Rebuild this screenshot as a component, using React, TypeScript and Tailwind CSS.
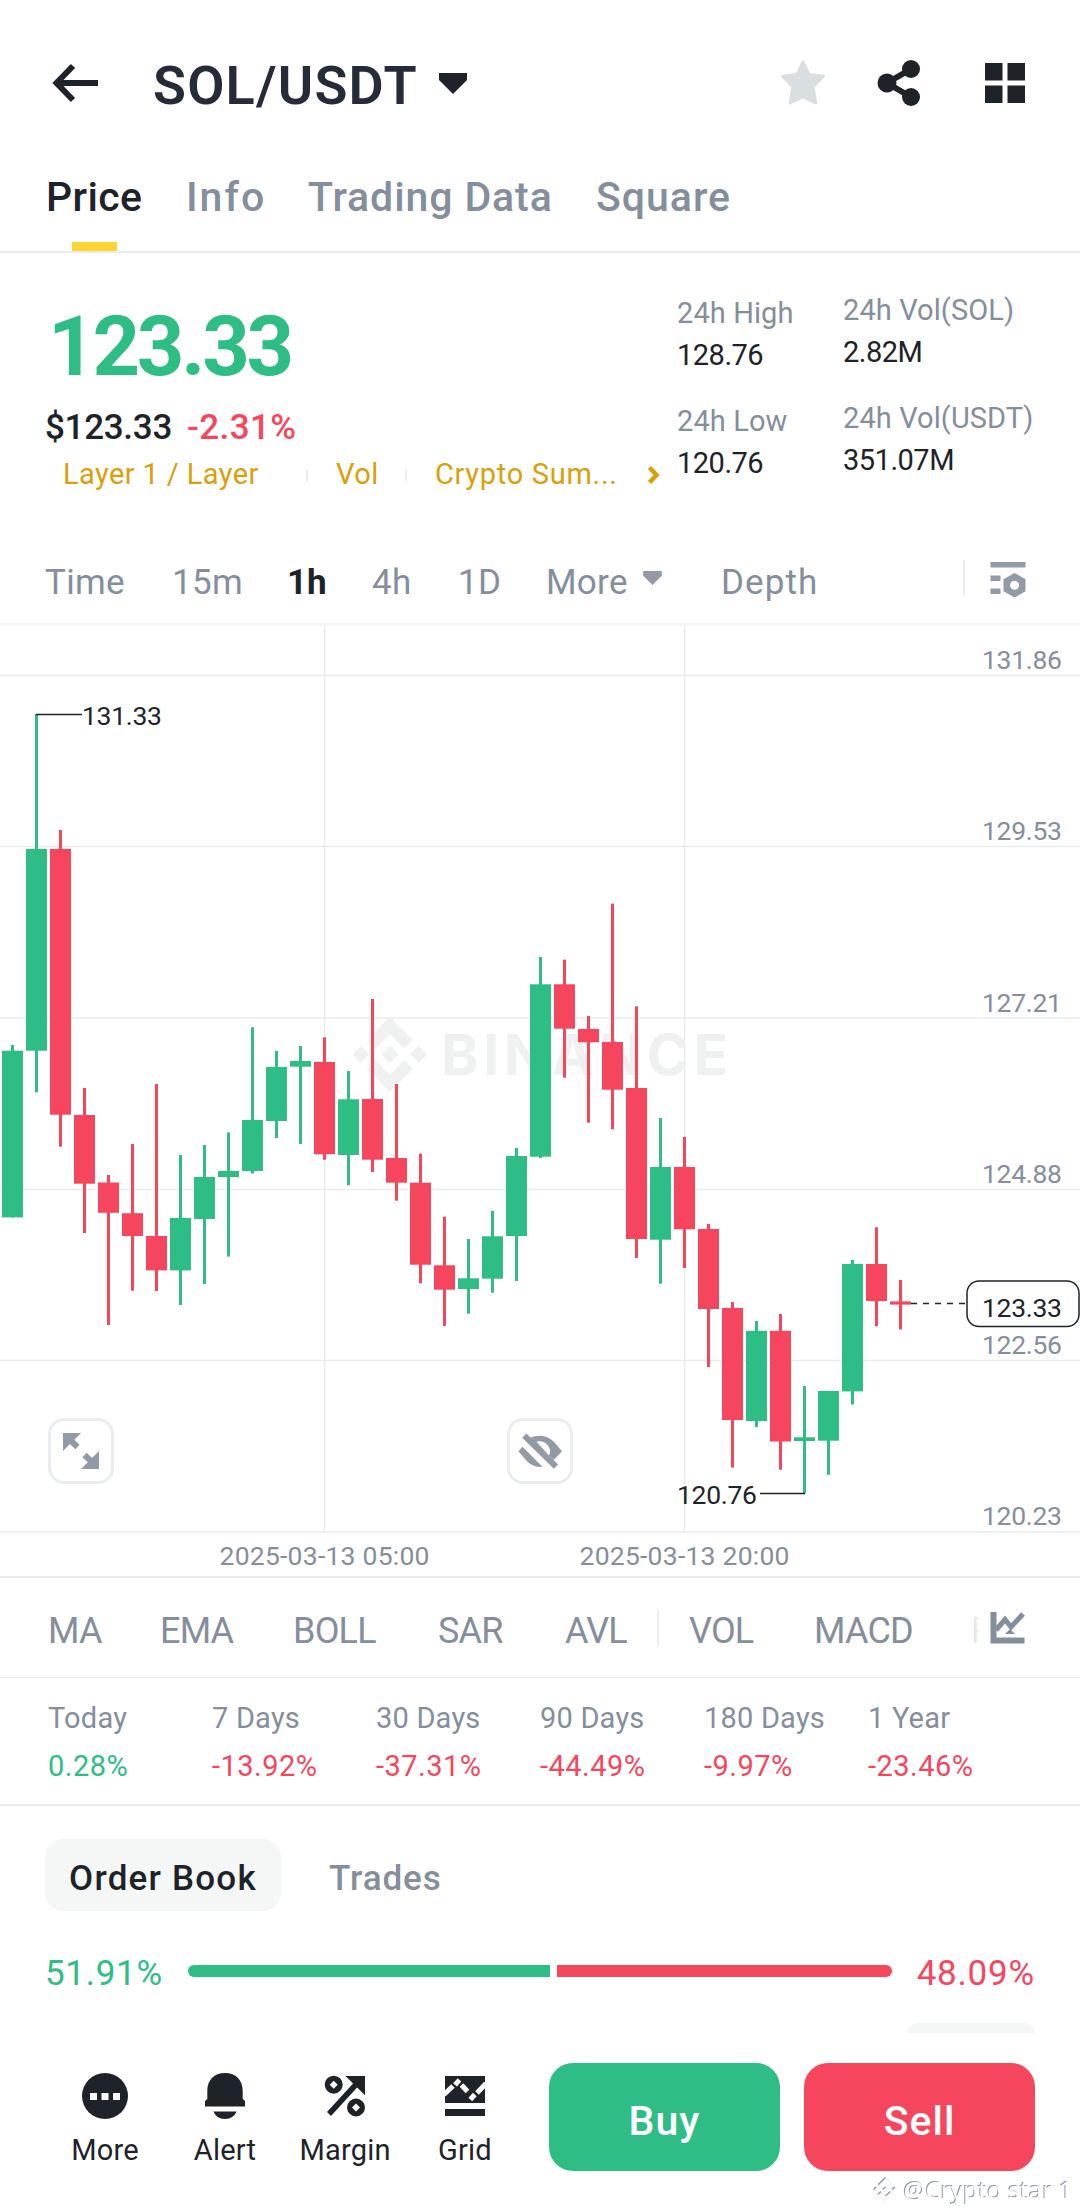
import React from "react";
import clsx from "clsx";

const LOGO_PATH =
  "M38.73 53.2l24.59-24.58 24.6 24.6 14.3-14.31L63.32 0l-38.9 38.9zM0 63.31l14.3-14.31 14.31 14.31-14.31 14.3zM38.73 73.41l24.59 24.59 24.6-24.6 14.31 14.29-38.9 38.91-38.91-38.88zM98 63.31l14.3-14.31 14.31 14.3-14.31 14.32zM77.83 63.3L63.32 48.78 48.81 63.28l14.51 14.5z";

const UP = "#2ebd85";
const DOWN = "#f6465d";

// direction, high, body top, body bottom, low
type Candle = ["u" | "d", number, number, number, number];

const candles: Candle[] = [
  ["u", 1045, 1050.7, 1217.4, 1217.4],
  ["u", 714, 849, 1050.7, 1092.4],
  ["d", 830, 849, 1114.7, 1146.7],
  ["d", 1088, 1115, 1183.7, 1233],
  ["d", 1175, 1182.5, 1212.8, 1325],
  ["d", 1144, 1213.2, 1236, 1290.7],
  ["d", 1084, 1236, 1270.4, 1291],
  ["u", 1155, 1218, 1270.4, 1305],
  ["u", 1145, 1177, 1219, 1284],
  ["u", 1132.4, 1171, 1177, 1256.6],
  ["u", 1027.3, 1120, 1171, 1173.5],
  ["u", 1051, 1067, 1121, 1138],
  ["u", 1046, 1061, 1066.7, 1144],
  ["d", 1037.3, 1062, 1154.3, 1159.7],
  ["u", 1071, 1099.3, 1155, 1185.3],
  ["d", 999, 1099, 1159.7, 1172],
  ["d", 1084, 1158, 1182.7, 1200.7],
  ["d", 1153.7, 1182.7, 1264.7, 1283.3],
  ["d", 1216.7, 1265.3, 1289.7, 1326],
  ["u", 1239, 1278.3, 1289, 1313.7],
  ["u", 1211, 1236.3, 1278.7, 1292.7],
  ["u", 1148, 1156, 1236, 1281],
  ["u", 957, 984.3, 1156.7, 1158],
  ["d", 959.6, 984.3, 1028.7, 1077.7],
  ["d", 1016, 1029, 1042.3, 1122.7],
  ["d", 903.6, 1042, 1089.7, 1129.3],
  ["d", 1006.3, 1088, 1239, 1258],
  ["u", 1118, 1167, 1239.7, 1283.7],
  ["d", 1137, 1167, 1229.3, 1268],
  ["d", 1224, 1229, 1309, 1367],
  ["d", 1302, 1308, 1420, 1467.6],
  ["u", 1321, 1330.8, 1421, 1427.2],
  ["d", 1314, 1330.8, 1441.5, 1469.7],
  ["u", 1386, 1437.3, 1441, 1493],
  ["u", 1391, 1391, 1440.7, 1474.8],
  ["u", 1260, 1264, 1391.4, 1404.5],
  ["d", 1227.3, 1264, 1301, 1326.2],
  ["d", 1280, 1301.4, 1304.6, 1329.5],
];

const gridRows = [
  { y: 675.5, label: "131.86" },
  { y: 846.5, label: "129.53" },
  { y: 1018, label: "127.21" },
  { y: 1189.5, label: "124.88" },
  { y: 1360.5, label: "122.56" },
  { y: 1531.8, label: "120.23" },
];

const gridColumns = [
  { x: 324.5, label: "2025-03-13 05:00" },
  { x: 684.5, label: "2025-03-13 20:00" },
];

const tabs = [
  { label: "Price", className: "w-[96px] tracking-[0.4px]", active: true },
  { label: "Info", className: "w-[78px] tracking-[2px]" },
  { label: "Trading Data", className: "w-[244px] tracking-[0.9px]" },
  { label: "Square", className: "w-[136px] tracking-[1px]" },
];

const intervals = [
  { label: "Time", width: "w-[127px]" },
  { label: "15m", width: "w-[115px]" },
  { label: "1h", width: "w-[85px]", active: true },
  { label: "4h", width: "w-[86px]" },
  { label: "1D", width: "w-[88px]" },
  { label: "More", width: "w-[97px]" },
];

const indicators = [
  { label: "MA", width: "w-[112px]" },
  { label: "EMA", width: "w-[133px]" },
  { label: "BOLL", width: "w-[145px]" },
  { label: "SAR", width: "w-[127px]" },
  { label: "AVL", width: "w-[92px]" },
];

const periods = [
  { label: "Today", value: "0.28%" },
  { label: "7 Days", value: "-13.92%" },
  { label: "30 Days", value: "-37.31%" },
  { label: "90 Days", value: "-44.49%" },
  { label: "180 Days", value: "-9.97%" },
  { label: "1 Year", value: "-23.46%" },
];

const Caret = ({ className }: { className?: string }) => (
  <svg viewBox="0 0 28 21" className={className} fill="currentColor">
    <path d="M0 0h28v7L14 21 0 7z" />
  </svg>
);

const Header = () => (
  <header className="flex h-[166px] items-center pl-[52px] pr-[55px]">
    <svg width="48" height="40" viewBox="0 0 48 40" fill="none" stroke="currentColor" strokeWidth="6">
      <path d="M46 20H6M21 3L4.5 20 21 37" />
    </svg>
    <h1 className="ml-[53px] w-[267px] whitespace-nowrap pt-[5px] text-[54px] font-semibold leading-[54px] tracking-[1.2px] text-[#252c38]">
      SOL/USDT
    </h1>
    <Caret className="ml-[19px] h-[21px] w-[28px]" />
    <div className="ml-auto flex items-center">
      <svg width="48" height="48" viewBox="0 0 48 48" className="text-[#d9dfe1]">
        <path
          d="M24 3l6 12.500 14.500 1.800-10.500 10.700 2.800 16L24 38 11.200 44 14 28 3.500 17.300 18 15.500z"
          fill="currentColor"
          stroke="currentColor"
          strokeWidth="3"
          strokeLinejoin="round"
        />
      </svg>
      <svg width="48" height="48" viewBox="0 0 48 48" className="ml-[48px]" fill="currentColor">
        <path d="M36 10L12 24l24 14" fill="none" stroke="currentColor" strokeWidth="6" />
        <circle cx="36" cy="10" r="9" />
        <circle cx="12" cy="24" r="9.500" />
        <circle cx="36" cy="38" r="9" />
      </svg>
      <svg width="40" height="40" viewBox="0 0 40 40" className="ml-[62px]" fill="currentColor">
        <path d="M0 0h17.500v17.500H0zM22.500 0H40v17.500H22.500zM0 22.500h17.500V40H0zM22.500 22.500H40V40H22.500z" />
      </svg>
    </div>
  </header>
);

const Tabs = () => (
  <nav className="flex h-[87px] gap-[44px] border-b-2 border-[#eaecef] pl-[46px]">
    {tabs.map(({ label, className, active }) => (
      <div
        key={label}
        className={clsx(
          "flex h-full flex-col justify-between whitespace-nowrap pt-[11px] text-[41px] font-medium leading-[41px]",
          className,
          active ? "text-[#1e2329]" : "text-[#848e9c]",
        )}
      >
        {label}
        {active && <span className="h-[9px] w-[45px] self-center bg-[#fcd535]" />}
      </div>
    ))}
  </nav>
);

const Stat = ({ label, value }: { label: string; value: string }) => (
  <div className="flex h-[108px] flex-col gap-[13px] whitespace-nowrap">
    <span className="text-[29px] leading-[29px] tracking-[0.1px] text-[#848e9c]">{label}</span>
    <span className="text-[29px] leading-[29px] tracking-[-0.5px]">{value}</span>
  </div>
);

const Summary = () => (
  <section className="flex h-[288px]">
    <div className="flex w-[677px] shrink-0 flex-col pl-[46px] pt-[52px]">
      <div className="pl-[2px] text-[83px] font-bold leading-[83px] tracking-[-3.2px] text-[#2ebd85]">
        123.33
      </div>
      <div className="mt-[22px] flex gap-[15px] text-[35px] font-medium leading-[35px]">
        <span className="-ml-px tracking-[-0.3px]">$123.33</span>
        <span className="tracking-[0.4px] text-[#f6465d]">-2.31%</span>
      </div>
      <div className="mt-[15px] flex items-center whitespace-nowrap pl-[16px] text-[29px] leading-[29px] text-[#d9a00c]">
        <span className="w-[244px] pl-px tracking-[0.4px]">Layer 1 / Layer</span>
        <span className="h-[12px] w-[2px] bg-[#eaecef]" />
        <span className="ml-[28px] w-[69px] tracking-[0.5px]">Vol</span>
        <span className="h-[12px] w-[2px] bg-[#eaecef]" />
        <span className="ml-[28px] w-[212px] tracking-[0.7px]">Crypto Sum...</span>
        <svg width="13" height="18" viewBox="0 0 13 18" fill="none" stroke="currentColor" strokeWidth="4.500">
          <path d="M2.500 1.500L9.500 9l-7 7.500" />
        </svg>
      </div>
    </div>
    <div className="w-[166px] pt-[46px]">
      <Stat label="24h High" value="128.76" />
      <Stat label="24h Low" value="120.76" />
    </div>
    <div className="pt-[43px]">
      <Stat label="24h Vol(SOL)" value="2.82M" />
      <Stat label="24h Vol(USDT)" value="351.07M" />
    </div>
  </section>
);

const IntervalBar = () => (
  <div className="flex h-[85px] items-center border-b-[3px] border-[#f5f7f7] pl-[45px] text-[35px] leading-[35px] text-[#848e9c]">
    {intervals.map(({ label, width, active }) => (
      <span key={label} className={clsx(width, active ? "font-bold text-[#1e2329]" : "tracking-[0.3px]")}>
        {label}
      </span>
    ))}
    <Caret className="-mt-[8px] h-[14px] w-[19px] text-[#929aa5]" />
    <span className="ml-[59px] tracking-[1.1px]">Depth</span>
    <span className="-mt-[8px] ml-auto h-[36px] w-[2px] bg-[#eaecef]" />
    <svg width="36" height="36" viewBox="0 0 36 36" className="-mt-[6px] ml-[25px] mr-[54px] text-[#929aa5]">
      <path
        d="M.500 1h35v5.500h-35zM.500 14.500h10V20h-10zM.500 27.500h10V33h-10z"
        fill="currentColor"
      />
      <path
        d="M24.500 12l11 6.200v12.100l-11 6.200-11-6.200V18.200zm0 7.700a4.500 4.500 0 100 9 4.500 4.500 0 000-9z"
        fill="currentColor"
        fillRule="evenodd"
      />
    </svg>
  </div>
);

const Chart = () => (
  <section className="relative h-[952px] border-b-2 border-[#eaecef]">
    <svg width="1080" height="950" viewBox="0 626 1080 950" fontSize="26.500" className="block">
      <g stroke="#eaecec" strokeWidth="1.500">
        {gridRows.map(({ y }) => (
          <path key={y} d={`M0 ${y}h1080`} />
        ))}
        {gridColumns.map(({ x }) => (
          <path key={x} d={`M${x} 626V1532`} />
        ))}
      </g>
      <g fill="#eff1f1">
        <path d={LOGO_PATH} transform="translate(352.500 1017) scale(.59)" />
        <text
          x="441"
          y="1075"
          textLength="287"
          fontSize="57"
          fontWeight="700"
          fontFamily="Inter, sans-serif"
        >
          BINANCE
        </text>
      </g>
      {candles.map(([direction, high, top, bottom, low], index) => {
        const x = 12.5 + index * 24;
        return (
          <g key={index} fill={direction === "u" ? UP : DOWN}>
            <rect x={x - 1.5} y={high} width="3" height={low - high} />
            <rect x={x - 10.5} y={top} width="21" height={bottom - top} />
          </g>
        );
      })}
      <g fill="#848e9c">
        {gridRows.map(({ y, label }) => (
          <text key={label} x="982" y={y - 6.5} textLength="80">
            {label}
          </text>
        ))}
        {gridColumns.map(({ x, label }) => (
          <text key={label} x={x - 105} y="1564.500" textLength="210">
            {label}
          </text>
        ))}
      </g>
      <g stroke="#1e2329" strokeWidth="1.500" fill="none">
        <path d="M36 714.500h46M760 1493.500h45" />
        <path d="M911 1303.500h55" strokeDasharray="6 6" />
        <rect x="967" y="1281" width="112" height="45.500" rx="12" fill="#fff" />
      </g>
      <g fill="#1e2329">
        <text x="82" y="724.500" textLength="80">131.33</text>
        <text x="677" y="1503.500" textLength="80">120.76</text>
        <text x="982" y="1316.500" textLength="80">123.33</text>
      </g>
    </svg>
    <button className="absolute left-[48px] top-[792px] size-[66px] rounded-[16px] border-[3px] border-[#e9edf0] bg-white text-[#929aa5]">
      <svg width="60" height="60" viewBox="3 3 60 60" fill="currentColor">
        <path d="M15 15h18L15 33zM51 51H33l18-18z" />
        <path d="M20 20l9.500 9M36.500 37l9.500 9" stroke="currentColor" strokeWidth="6" />
      </svg>
    </button>
    <button className="absolute left-[507px] top-[792px] size-[66px] rounded-[16px] border-[3px] border-[#e9edf0] bg-white text-[#929aa5]">
      <svg width="60" height="60" viewBox="3 3 60 60" fill="currentColor">
        <path d="M17.300 17.700L49 48.700" stroke="currentColor" strokeWidth="6" />
        <path
          d="M23 20c8-4 18-3 25 5l7 8.300-8.300 8.700zM29.500 23.500l12.500 14c4-7-3-16-12.500-14z"
          fillRule="evenodd"
        />
        <path d="M11.500 33.300l4-4.600L35.700 49c-6 0-11-1-16-6z" />
      </svg>
    </button>
  </section>
);

const IndicatorBar = () => (
  <div className="flex h-[100px] items-center border-b border-[#eaecef] pl-[48px] text-[36px] leading-[36px] tracking-[-0.8px] text-[#848e9c]">
    {indicators.map(({ label, width }) => (
      <span key={label} className={clsx("pt-[7px]", width)}>
        {label}
      </span>
    ))}
    <span className="h-[36px] w-[2px] bg-[#eaecef]" />
    <span className="ml-[30px] w-[125px] pt-[7px]">VOL</span>
    <span className="w-[157px] pt-[7px]">MACD</span>
    <span className="w-[23px] bg-linear-to-r from-[#d5d9dd] to-transparent to-45% bg-clip-text pt-[7px] text-transparent">
      R
    </span>
    <svg width="36" height="36" viewBox="0 0 36 36" className="-ml-[4px]" fill="none" stroke="currentColor">
      <path d="M3.500 2v28.500h31" strokeWidth="6" />
      <path d="M6 20l9-10.500 6 7.500L33 4" strokeWidth="5" />
      <path d="M15 24l5-5 5 5z" fill="currentColor" stroke="none" />
    </svg>
  </div>
);

const Performance = () => (
  <div className="flex h-[128px] border-b-2 border-[#eaecef] pl-[48px] pt-[26px]">
    {periods.map(({ label, value }) => (
      <div key={label} className="flex w-[164px] flex-col gap-[19px] text-[29px] leading-[29px]">
        <span className="tracking-[0.2px] text-[#848e9c]">{label}</span>
        <span className={clsx("tracking-[0.5px]", value.startsWith("-") ? "text-[#f6465d]" : "text-[#2ebd85]")}>
          {value}
        </span>
      </div>
    ))}
  </div>
);

const OrderBook = () => (
  <section className="flex h-[227px] flex-col overflow-hidden px-[45px] pt-[33px] text-[35px] leading-[35px]">
    <div className="flex font-medium">
      <div className="flex h-[72px] w-[236px] items-center justify-center rounded-[18px] bg-[#f5f7f7] pt-[6px] tracking-[1.2px]">
        Order Book
      </div>
      <div className="flex h-[72px] items-center pl-[48px] pt-[6px] tracking-[0.9px] text-[#848e9c]">Trades</div>
    </div>
    <div className="mt-[42px] flex h-[35px] items-center">
      <span className="w-[143px] pt-[5px] tracking-[0.7px] text-[#2ebd85]">51.91%</span>
      <div className="flex h-[12px] flex-1 gap-[7px]">
        <div className="w-[362px] rounded-l-full bg-[#2ebd85]" />
        <div className="flex-1 rounded-r-full bg-[#f6465d]" />
      </div>
      <span className="w-[143px] pt-[5px] text-right tracking-[0.8px] text-[#f6465d]">48.09%</span>
    </div>
    <div className="ml-auto mt-[35px] h-[40px] w-[128px] shrink-0 rounded-[10px] bg-[#f5f7f7]" />
  </section>
);

const Action = ({ label, children }: { label: string; children: React.ReactNode }) => (
  <div className="flex w-[120px] flex-col items-center gap-[16px] text-[29px] leading-[29px] tracking-[0.2px]">
    <svg width="48" height="48" viewBox="0 0 48 48" fill="currentColor">
      {children}
    </svg>
    {label}
  </div>
);

const BottomBar = () => (
  <footer className="relative flex h-[178px] pl-[45px] pr-[45px] pt-[30px]">
    <div className="flex w-[504px] pt-[9px]">
      <Action label="More">
        <circle cx="24" cy="24" r="23" />
        <path d="M9 21h7v7H9zM20.500 21h7v7h-7zM32 21h7v7h-7z" fill="#fff" />
      </Action>
      <Action label="Alert">
        <path d="M6.300 19C6.300 8 13 1 24 1s17.700 7 17.700 18v8l2.300 2v5.500H4V29l2.300-2zM12.500 39.500h23C34 44 29.500 47 24 47s-10-3-11.500-7.500z" />
      </Action>
      <Action label="Margin">
        <path d="M24.400 4H44v19.300zM10 44l-4-4L33 10.500l4 4z" />
        <path
          d="M12.700 3.700a9 9 0 100 18 9 9 0 000-18zm0 5l4 4-4 4-4-4zM35 26.500a9 9 0 100 18 9 9 0 000-18zm0 5l4 4-4 4-4-4z"
          fillRule="evenodd"
        />
      </Action>
      <Action label="Grid">
        <path d="M4 4h40v27H4zM4 37h40v7H4z" />
        <path
          d="M3 22.500l9-8.500M14 12.800l4.500-5M20.500 13l6 6.500M29.300 27.500l4.500-5M36 21L45 11.500"
          stroke="#fff"
          strokeWidth="5"
        />
      </Action>
    </div>
    <div className="flex gap-[24px] text-[41px] font-medium leading-[41px] tracking-[1px] text-white">
      <button className="flex h-[108px] w-[231px] items-center justify-center rounded-[24px] bg-[#2ebd85] pt-[8px]">
        Buy
      </button>
      <button className="flex h-[108px] w-[231px] items-center justify-center rounded-[24px] bg-[#f6465d] pt-[8px]">
        Sell
      </button>
    </div>
    <div className="absolute bottom-[7px] right-[7px] flex items-center gap-[4px] whitespace-nowrap font-['Noto_Sans',sans-serif] text-[24px] leading-[28px] tracking-[0.2px] text-white drop-shadow-[-1px_-1px_0.5px_#8f99a8]">
      <svg width="28" height="24" viewBox="0 0 126.600 126.600" fill="currentColor">
        <path d={LOGO_PATH} />
      </svg>
      @Crypto star 1
    </div>
  </footer>
);

export default function App() {
  return (
    <main className="h-[2211px] w-[1080px] overflow-hidden bg-white font-['Roboto',sans-serif] text-[#1e2329]">
      <Header />
      <Tabs />
      <Summary />
      <IntervalBar />
      <Chart />
      <IndicatorBar />
      <Performance />
      <OrderBook />
      <BottomBar />
    </main>
  );
}
